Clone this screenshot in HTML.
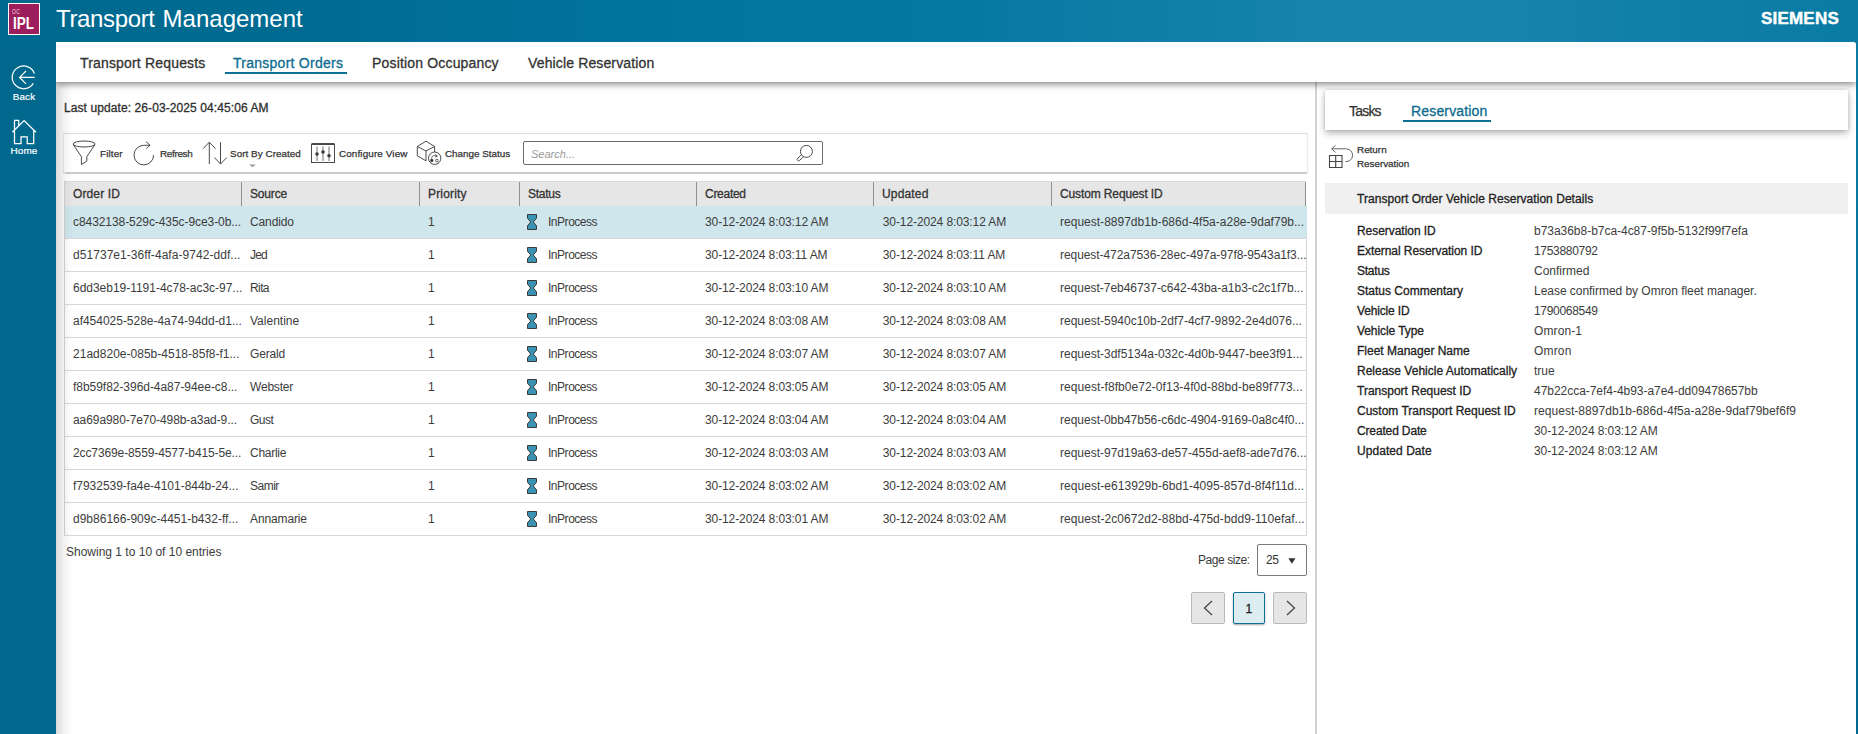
<!DOCTYPE html>
<html lang="en"><head>
<meta charset="utf-8">
<title>Transport Management</title>
<style>
*{box-sizing:border-box;margin:0;padding:0}
html,body{width:1858px;height:734px;overflow:hidden}
body{font-family:"Liberation Sans",sans-serif;font-size:12px;color:#3a3a3a;background:#006c93;position:relative}
.abs{position:absolute}
.t{position:absolute;white-space:nowrap;line-height:1}
.sb{-webkit-text-stroke:0.35px currentColor}
#hdr{left:0;top:0;width:1858px;height:42px;background:linear-gradient(90deg,#00678d 0%,#00698f 25%,#0f7ea6 55%,#1585ae 70%,#0f7ea6 85%,#0b78a0 100%)}
#side{left:0;top:42px;width:56px;height:692px;background:#00678d}
#main{left:56px;top:42px;width:1800px;height:692px;background:#fff;border-top-right-radius:3px;overflow:hidden}
#tabs{left:0;top:0;width:1800px;height:40px;background:#fff;box-shadow:0 1px 6px rgba(0,0,0,.45);z-index:5}

#logo{left:8px;top:3px;width:32px;height:32px;background:#9d1e5c;border:1px solid #fff}
#logo .oc{left:3px;top:5px;font-size:7px;color:#f3dbe6;letter-spacing:.4px}
#logo .ipl{left:3.5px;top:12px;font-size:16.5px;font-weight:bold;color:#fff;transform:scaleX(.8);transform-origin:0 0}
#title{left:56px;top:5px;font-size:24.5px;color:#fff;letter-spacing:-.55px}
#siemens{left:1761px;top:10px;font-size:15.5px;font-weight:bold;color:#fff;letter-spacing:.2px}
.nav{left:0;width:48px;text-align:center;color:#fff;font-size:10.5px}

#title{left:56px;top:8px;font-size:22px;color:#fff;letter-spacing:.55px}
.tab{top:14px;font-size:13.5px;color:#333;-webkit-text-stroke:.3px #333}
.tab.on{color:#0f6f92;-webkit-text-stroke:.3px #0f6f92}
.ul{height:2px;background:#0f789b}
#lshadow{left:0;top:40px;width:8px;height:652px;background:linear-gradient(90deg,rgba(0,0,0,.16),rgba(0,0,0,.04) 50%,rgba(0,0,0,0));z-index:4}
#upd{left:8px;top:59px;font-size:12px;color:#2f2f2f;-webkit-text-stroke:.3px #2f2f2f}
#tb{left:8px;top:92px;width:1243px;height:38px;background:#fff;border:1px solid #dcdcdc;box-shadow:0 1px 3px rgba(0,0,0,.35)}
.tbl{top:14px;font-size:10px;color:#333;-webkit-text-stroke:.25px #333}
#search{left:467px;top:99px;width:300px;height:24px;border:1px solid #6b6b6b;border-radius:2px;background:#fff}
#search .ph{left:7px;top:6px;font-size:11.5px;font-style:italic;color:#9a9a9a}

#title{top:9px;letter-spacing:.95px}
.tab{top:13.5px;font-size:14px;letter-spacing:.22px}
#upd{top:59.5px;letter-spacing:.09px}
.tbl{top:14px;font-size:9.6px;letter-spacing:.2px}
#search .ph{font-size:11px;top:6.5px}
svg{position:absolute;overflow:visible}
.ic{fill:none;stroke:#4a4a4a;stroke-width:1}
.navt{left:0;width:48px;text-align:center;color:#fff;font-size:10px;-webkit-text-stroke:.3px #fff;letter-spacing:.2px}
#thead{left:8px;top:139px;width:1243px;height:25px;background:#e6e6e6;border-left:1px solid #d4d4d4;border-top:1px solid #dadada}
.th{top:6px;font-size:12px;color:#333;-webkit-text-stroke:.3px #333}
.cs{top:0;width:1px;height:25px;background:#8f8f8f}
.row{left:8px;width:1243px;height:33px;border-left:1px solid #d4d4d4;border-right:1px solid #d4d4d4;border-bottom:1px solid #d9d9d9;background:#fff}
.row.sel{background:#cfe6ec}
.td{top:10px;font-size:12px;color:#3c3c3c}

#showing{left:10px;top:504px;font-size:12px;color:#3c3c3c}
#pgsz{left:1142px;top:512px;font-size:12px;color:#3c3c3c}
#sel{left:1201px;top:502px;width:50px;height:32px;border:1px solid #7a7a7a;border-radius:2px;background:#fff}
.pb{top:550px;width:34px;height:32px;background:#e6e6e6;border:1px solid #b9b9b9;border-radius:2px}
.pb.cur{width:32px;background:#dcecf1;border-color:#0f6f92;box-shadow:0 1px 2px rgba(0,0,0,.35)}
#vsep{left:1259px;top:40px;width:2px;height:652px;background:#d2d2d2;z-index:3}
#rshadow{left:1261px;top:40px;width:8px;height:652px;background:linear-gradient(90deg,rgba(0,0,0,.10),rgba(0,0,0,.03) 50%,rgba(0,0,0,0));z-index:3}
#rtabs{left:1269px;top:48px;width:523px;height:39px;background:#fff;box-shadow:0 2px 6px rgba(0,0,0,.35)}
.rtab{top:13px;font-size:14px;color:#333;-webkit-text-stroke:.25px #333;letter-spacing:.2px}
.rtab.on{color:#0f6f92;-webkit-text-stroke:.25px #0f6f92}
.rr{left:1301px;font-size:9.6px;color:#333;-webkit-text-stroke:.25px #333;letter-spacing:.2px}
#sec{left:1269px;top:141px;width:523px;height:31px;background:#f0f0f0}
#sec span{left:32px;top:9.5px;font-size:12px;color:#2f2f2f;-webkit-text-stroke:.3px #2f2f2f}
.dl{left:1301px;font-size:12px;color:#2f2f2f;-webkit-text-stroke:.3px #2f2f2f}
.dv{left:1478px;font-size:12px;color:#3c3c3c}

#logo .oc{left:3.2px;top:4px;font-size:8px;letter-spacing:.6px;transform:scaleX(.62);transform-origin:0 0}
#logo .ipl{top:10.8px;left:3.8px;transform:scaleX(.82)}
.navt{font-size:9.4px;letter-spacing:0;-webkit-text-stroke:.3px #fff}
.tab{letter-spacing:.17px}

#title{top:7.3px;font-size:24px;letter-spacing:0}

.c1{letter-spacing:-.11px}.c4{letter-spacing:-.47px}.c5{letter-spacing:-.1px}.c7{letter-spacing:-.07px}

#tb{left:7px;top:91px;width:1245px;height:39px;border:0;border-top:1px solid #dcdcdc;border-left:1px solid #ececec;border-right:1px solid #ececec;box-shadow:0 1.5px 1px rgba(0,0,0,.2)}
#tb svg{left:0;top:0}
#thead{width:1242px}
#lshadow{width:14px;background:linear-gradient(90deg,rgba(0,0,0,.16),rgba(0,0,0,.07) 30%,rgba(0,0,0,.02) 65%,rgba(0,0,0,0))}
.navt{-webkit-text-stroke:.2px #fff}
.rtab{top:14.2px}
.dl,#sec span{color:#222;-webkit-text-stroke:.3px #222}
.dvd{letter-spacing:-.09px}

.tbl{margin-left:1px;top:15px}

#siemens{top:9.7px;font-size:17px;-webkit-text-stroke:.45px #fff}

#hdr{background:linear-gradient(90deg,#00698f 0%,#006b92 17%,#0076a1 39%,#0278a2 50%,#087aa3 54%,#1583aa 70%,#1684ab 80%,#0f7ea6 92%,#0a7ba3 100%)}
body{background:linear-gradient(180deg,#0a7ba3 0,#0a7ba3 42px,#00678d 100%)}

#rshadow{display:none}
#rtabs{height:40px;box-shadow:0 3px 7px rgba(0,0,0,.3),0 0 3px rgba(0,0,0,.12)}
#lshadow{width:18px;background:linear-gradient(90deg,rgba(0,0,0,.15),rgba(0,0,0,.11) 15%,rgba(0,0,0,.05) 45%,rgba(0,0,0,.015) 75%,rgba(0,0,0,0))}
.rr,.tbl{font-size:9.9px}

#tabs{box-shadow:0 2px 7px rgba(0,0,0,.5)}
.ul{background:#0a7297}
.tab.on,.rtab.on{color:#0c6b90;-webkit-text-stroke:.3px #0c6b90}
.pb svg path{stroke-width:1.25;stroke:#444}
.ttl{top:7.3px;font-size:24px;color:#fff}
.tab{top:13.9px}
.navt{font-size:9.9px;letter-spacing:.15px}
.row.sel{border-right-color:#cfe6ec}
</style>
</head>
<body>
<div class="abs" id="hdr">
  <div class="abs" id="logo"><span class="t oc">OC</span><span class="t ipl">IPL</span></div>
  <div class="t ttl" style="left: 56px; letter-spacing: -0.35px;">Transport</div><div class="t ttl" style="left:162.6px">Management</div>
  <div class="t" id="siemens">SIEMENS</div>
</div>
<div class="abs" id="side">
  <svg width="56" height="120" style="left:0;top:.8px" viewBox="0 42 56 120">
    <g fill="none" stroke="#fff" stroke-width="1.25">
      <path d="M34.4 72.6A11.4 11.4 0 1 0 33.3 82.4"></path>
      <path d="M34.7 76.4H19.6M26 70L19.6 76.4L26 82.9"></path>
      <path d="M14.5 128.9V119.3H18.7V124.8M12.3 131.3L24.1 119.6L36 131.3M14.5 129.2V142.5H21V135.8H27.2V142.5H33.7V129.2"></path>
    </g>
  </svg>
  <div class="t navt" style="top:50px">Back</div>
  <div class="t navt" style="top:104.2px">Home</div>
</div>
<div class="abs" id="main">
  <div class="abs" id="tabs">
    <span class="t tab" style="left:24px">Transport Requests</span>
    <span class="t tab on" style="left: 177px; letter-spacing: 0.257px;">Transport Orders</span>
    <div class="abs ul" style="left:169px;top:30px;width:122px"></div>
    <span class="t tab" style="left:316px">Position Occupancy</span>
    <span class="t tab" style="left: 472px; letter-spacing: 0.137px;">Vehicle Reservation</span>
  </div>
  <div class="abs" id="lshadow"></div>
  <div class="t" id="upd">Last update: 26-03-2025 04:45:06 AM</div>
  <div class="abs" id="tb">
    <svg width="1243" height="38" viewBox="64 134 1243 38">
      <g class="ic">
        <ellipse cx="84.1" cy="144" rx="10.9" ry="3"></ellipse>
        <path d="M73.4 144.8L81.4 156.7V164.5L86.8 161.2V156.7L94.8 144.8"></path>
        <path d="M150 145.2L143.8 145.3A9.8 9.8 0 1 0 153.6 155.1"></path>
        <path d="M146 141.7L150.1 145.2L146.4 148.6"></path>
        <path d="M209.3 164V142.2M203.2 148.7L209.3 142.2L215.5 148.7M220.5 142.2V164M214.4 157.5L220.5 164L226.8 157.5"></path>
        <rect x="311.5" y="144.5" width="23" height="18"></rect>
        <path d="M311.5 144H334.5" stroke-width="2"></path>
        <path d="M317 146.5V161M323 146.5V161M329 146.5V161" stroke="#9a9a9a" stroke-width="1.4"></path>
        <path d="M426 141.2L417.3 146.5V155.8L426 160.8V150.9L434.6 146.5V152M426 141.2L434.6 146.5M417.3 146.5L426 150.9"></path>
        <circle cx="434.7" cy="158.2" r="6.2" fill="#fff"></circle>
        <path d="M431.6 158.6C431.8 155.6 434.6 154.6 437 156.2M435.6 154.4L437.4 156.2L435 157.2" stroke-width=".9"></path>
        <circle cx="436.9" cy="160.6" r="1.3" stroke-width=".9"></circle>
      </g>
      <g fill="#3a3a3a"><circle cx="317" cy="154" r="1.8"></circle><circle cx="323" cy="152" r="1.8"></circle><circle cx="329" cy="155.8" r="1.8"></circle><circle cx="431.8" cy="160.4" r="1.6"></circle></g>
      <path d="M249 164.4H256L252.5 167.3Z" fill="#9a9a9a"></path>
    </svg>
    <span class="t tbl" style="left: 35px; letter-spacing: 0.12px;">Filter</span>
    <span class="t tbl" style="left: 95px; letter-spacing: -0.317px;">Refresh</span>
    <span class="t tbl" style="left: 165px; letter-spacing: 0.043px;">Sort By Created</span>
    <span class="t tbl" style="left: 274px; letter-spacing: 0.123px;">Configure View</span>
    <span class="t tbl" style="left: 380px; letter-spacing: -0.017px;">Change Status</span>
  </div>
<div class="abs" id="thead"><span class="t th" style="left: 8px; letter-spacing: 0.114px;">Order ID</span><span class="t th" style="left: 185px; letter-spacing: -0.18px;">Source</span><span class="t th" style="left: 363px; letter-spacing: 0.171px;">Priority</span><span class="t th" style="left: 463px; letter-spacing: -0.26px;">Status</span><span class="t th" style="left: 640px; letter-spacing: -0.283px;">Created</span><span class="t th" style="left: 817px; letter-spacing: 0.167px;">Updated</span><span class="t th" style="left: 995px; letter-spacing: -0.125px;">Custom Request ID</span><div class="abs cs" style="left:176px"></div><div class="abs cs" style="left:354px"></div><div class="abs cs" style="left:454px"></div><div class="abs cs" style="left:631px"></div><div class="abs cs" style="left:808px"></div><div class="abs cs" style="left:986px"></div><div class="abs cs" style="left:1240px"></div></div>
<div class="abs row sel" style="top:164px"><span class="t td c1" style="left: 8px; letter-spacing: -0.071px;">c8432138-529c-435c-9ce3-0b...</span><span class="t td" style="left: 185px; letter-spacing: -0.117px;">Candido</span><span class="t td" style="left:363px">1</span><svg width="10" height="16" style="left:462px;top:8px" viewBox="0 0 10 16"><path d="M.5 .5H9.5V4.2L6.3 8L9.5 11.8V15.5H.5V11.8L3.7 8L.5 4.2Z" fill="#3a93b2" stroke="#3a3a3a" stroke-width="1"></path></svg><span class="t td c4" style="left:483px">InProcess</span><span class="t td c5" style="left:640px">30-12-2024 8:03:12 AM</span><span class="t td c5" style="left:817.8px">30-12-2024 8:03:12 AM</span><span class="t td c7" style="left: 995px; letter-spacing: 0.013px;">request-8897db1b-686d-4f5a-a28e-9daf79b...</span></div>
<div class="abs row" style="top:197px"><span class="t td c1" style="left: 8px; letter-spacing: 0.052px;">d51737e1-36ff-4afa-9742-ddf...</span><span class="t td" style="left: 185px; letter-spacing: -0.85px;">Jed</span><span class="t td" style="left:363px">1</span><svg width="10" height="16" style="left:462px;top:8px" viewBox="0 0 10 16"><path d="M.5 .5H9.5V4.2L6.3 8L9.5 11.8V15.5H.5V11.8L3.7 8L.5 4.2Z" fill="#3a93b2" stroke="#3a3a3a" stroke-width="1"></path></svg><span class="t td c4" style="left:483px">InProcess</span><span class="t td c5" style="left:640px">30-12-2024 8:03:11 AM</span><span class="t td c5" style="left:817.8px">30-12-2024 8:03:11 AM</span><span class="t td c7" style="left:995px">request-472a7536-28ec-497a-97f8-9543a1f3...</span></div>
<div class="abs row" style="top:230px"><span class="t td c1" style="left: 8px; letter-spacing: -0.021px;">6dd3eb19-1191-4c78-ac3c-97...</span><span class="t td" style="left: 185px; letter-spacing: -0.6px;">Rita</span><span class="t td" style="left:363px">1</span><svg width="10" height="16" style="left:462px;top:8px" viewBox="0 0 10 16"><path d="M.5 .5H9.5V4.2L6.3 8L9.5 11.8V15.5H.5V11.8L3.7 8L.5 4.2Z" fill="#3a93b2" stroke="#3a3a3a" stroke-width="1"></path></svg><span class="t td c4" style="left:483px">InProcess</span><span class="t td c5" style="left:640px">30-12-2024 8:03:10 AM</span><span class="t td c5" style="left:817.8px">30-12-2024 8:03:10 AM</span><span class="t td c7" style="left: 995px; letter-spacing: -0.033px;">request-7eb46737-c642-43ba-a1b3-c2c1f7b...</span></div>
<div class="abs row" style="top:263px"><span class="t td c1" style="left: 8px; letter-spacing: -0.021px;">af454025-528e-4a74-94dd-d1...</span><span class="t td" style="left:185px">Valentine</span><span class="t td" style="left:363px">1</span><svg width="10" height="16" style="left:462px;top:8px" viewBox="0 0 10 16"><path d="M.5 .5H9.5V4.2L6.3 8L9.5 11.8V15.5H.5V11.8L3.7 8L.5 4.2Z" fill="#3a93b2" stroke="#3a3a3a" stroke-width="1"></path></svg><span class="t td c4" style="left:483px">InProcess</span><span class="t td c5" style="left:640px">30-12-2024 8:03:08 AM</span><span class="t td c5" style="left:817.8px">30-12-2024 8:03:08 AM</span><span class="t td c7" style="left: 995px; letter-spacing: -0.007px;">request-5940c10b-2df7-4cf7-9892-2e4d076...</span></div>
<div class="abs row" style="top:296px"><span class="t td c1" style="left: 8px; letter-spacing: 0.015px;">21ad820e-085b-4518-85f8-f1...</span><span class="t td" style="left: 185px; letter-spacing: -0.16px;">Gerald</span><span class="t td" style="left:363px">1</span><svg width="10" height="16" style="left:462px;top:8px" viewBox="0 0 10 16"><path d="M.5 .5H9.5V4.2L6.3 8L9.5 11.8V15.5H.5V11.8L3.7 8L.5 4.2Z" fill="#3a93b2" stroke="#3a3a3a" stroke-width="1"></path></svg><span class="t td c4" style="left:483px">InProcess</span><span class="t td c5" style="left:640px">30-12-2024 8:03:07 AM</span><span class="t td c5" style="left:817.8px">30-12-2024 8:03:07 AM</span><span class="t td c7" style="left: 995px; letter-spacing: -0.007px;">request-3df5134a-032c-4d0b-9447-bee3f91...</span></div>
<div class="abs row" style="top:329px"><span class="t td c1" style="left: 8px; letter-spacing: -0.039px;">f8b59f82-396d-4a87-94ee-c8...</span><span class="t td" style="left: 185px; letter-spacing: -0.2px;">Webster</span><span class="t td" style="left:363px">1</span><svg width="10" height="16" style="left:462px;top:8px" viewBox="0 0 10 16"><path d="M.5 .5H9.5V4.2L6.3 8L9.5 11.8V15.5H.5V11.8L3.7 8L.5 4.2Z" fill="#3a93b2" stroke="#3a3a3a" stroke-width="1"></path></svg><span class="t td c4" style="left:483px">InProcess</span><span class="t td c5" style="left:640px">30-12-2024 8:03:05 AM</span><span class="t td c5" style="left:817.8px">30-12-2024 8:03:05 AM</span><span class="t td c7" style="left: 995px; letter-spacing: 0.061px;">request-f8fb0e72-0f13-4f0d-88bd-be89f773...</span></div>
<div class="abs row" style="top:362px"><span class="t td c1" style="left: 8px; letter-spacing: -0.08px;">aa69a980-7e70-498b-a3ad-9...</span><span class="t td" style="left: 185px; letter-spacing: -0.5px;">Gust</span><span class="t td" style="left:363px">1</span><svg width="10" height="16" style="left:462px;top:8px" viewBox="0 0 10 16"><path d="M.5 .5H9.5V4.2L6.3 8L9.5 11.8V15.5H.5V11.8L3.7 8L.5 4.2Z" fill="#3a93b2" stroke="#3a3a3a" stroke-width="1"></path></svg><span class="t td c4" style="left:483px">InProcess</span><span class="t td c5" style="left:640px">30-12-2024 8:03:04 AM</span><span class="t td c5" style="left:817.8px">30-12-2024 8:03:04 AM</span><span class="t td c7" style="left: 995px; letter-spacing: -0.011px;">request-0bb47b56-c6dc-4904-9169-0a8c4f0...</span></div>
<div class="abs row" style="top:395px"><span class="t td c1" style="left:8px">2cc7369e-8559-4577-b415-5e...</span><span class="t td" style="left: 185px; letter-spacing: -0.267px;">Charlie</span><span class="t td" style="left:363px">1</span><svg width="10" height="16" style="left:462px;top:8px" viewBox="0 0 10 16"><path d="M.5 .5H9.5V4.2L6.3 8L9.5 11.8V15.5H.5V11.8L3.7 8L.5 4.2Z" fill="#3a93b2" stroke="#3a3a3a" stroke-width="1"></path></svg><span class="t td c4" style="left:483px">InProcess</span><span class="t td c5" style="left:640px">30-12-2024 8:03:03 AM</span><span class="t td c5" style="left:817.8px">30-12-2024 8:03:03 AM</span><span class="t td c7" style="left: 995px; letter-spacing: -0.007px;">request-97d19a63-de57-455d-aef8-ade7d76...</span></div>
<div class="abs row" style="top:428px"><span class="t td c1" style="left: 8px; letter-spacing: -0.024px;">f7932539-fa4e-4101-844b-24...</span><span class="t td" style="left: 185px; letter-spacing: -0.5px;">Samir</span><span class="t td" style="left:363px">1</span><svg width="10" height="16" style="left:462px;top:8px" viewBox="0 0 10 16"><path d="M.5 .5H9.5V4.2L6.3 8L9.5 11.8V15.5H.5V11.8L3.7 8L.5 4.2Z" fill="#3a93b2" stroke="#3a3a3a" stroke-width="1"></path></svg><span class="t td c4" style="left:483px">InProcess</span><span class="t td c5" style="left:640px">30-12-2024 8:03:02 AM</span><span class="t td c5" style="left:817.8px">30-12-2024 8:03:02 AM</span><span class="t td c7" style="left: 995px; letter-spacing: 0.037px;">request-e613929b-6bd1-4095-857d-8f4f11d...</span></div>
<div class="abs row" style="top:461px"><span class="t td c1" style="left: 8px; letter-spacing: 0.004px;">d9b86166-909c-4451-b432-ff...</span><span class="t td" style="left: 185px; letter-spacing: -0.125px;">Annamarie</span><span class="t td" style="left:363px">1</span><svg width="10" height="16" style="left:462px;top:8px" viewBox="0 0 10 16"><path d="M.5 .5H9.5V4.2L6.3 8L9.5 11.8V15.5H.5V11.8L3.7 8L.5 4.2Z" fill="#3a93b2" stroke="#3a3a3a" stroke-width="1"></path></svg><span class="t td c4" style="left:483px">InProcess</span><span class="t td c5" style="left:640px">30-12-2024 8:03:01 AM</span><span class="t td c5" style="left:817.8px">30-12-2024 8:03:02 AM</span><span class="t td c7" style="left: 995px; letter-spacing: 0.067px;">request-2c0672d2-88bd-475d-bdd9-110efaf...</span></div>
  <div class="t" id="showing">Showing 1 to 10 of 10 entries</div>
  <div class="t" id="pgsz" style="letter-spacing: -0.444px;">Page size:</div>
  <div class="abs" id="sel"><span class="t" style="left:8px;top:9px;font-size:12px;letter-spacing:-.45px;color:#333">25</span><svg width="8" height="6" style="left:29.5px;top:13px" viewBox="0 0 8 6"><path d="M.3 .2H7.5L3.9 5.8Z" fill="#333"></path></svg></div>
  <div class="abs pb" style="left:1135px"><svg width="10" height="16" style="left:11px;top:7px" viewBox="0 0 10 16"><path d="M9 1L1.5 8L9 15" class="ic"></path></svg></div>
  <div class="abs pb cur" style="left:1177px"><span class="t" style="left:11.5px;top:10px;font-size:12px;color:#222;-webkit-text-stroke:.3px #222">1</span></div>
  <div class="abs pb" style="left:1217px"><svg width="10" height="16" style="left:12px;top:7px" viewBox="0 0 10 16"><path d="M1 1L8.5 8L1 15" class="ic"></path></svg></div>
  <div class="abs" id="vsep"></div>
  
  <div class="abs" id="rtabs">
    <span class="t rtab" style="left: 24px; letter-spacing: -0.8px;">Tasks</span>
    <span class="t rtab on" style="left: 86px; letter-spacing: 0.16px;">Reservation</span>
    <div class="abs ul" style="left:78px;top:30px;width:88px"></div>
  </div>
  <svg width="30" height="28" style="left:1270px;top:100px" viewBox="1326 142 30 28"><g class="ic"><path d="M1335.5 145.3L1331.6 148.8L1335.5 152.4M1331.8 148.8H1346.6A6.6 6.4 0 0 1 1345.4 161.6" stroke="#666"></path><path d="M1329.5 155.5H1342V167.5H1329.5ZM1335.7 155.5V167.5M1329.5 161.5H1342" stroke="#444" stroke-width="1.1"></path></g></svg>
  <span class="t rr" style="top: 102.5px; letter-spacing: 0px;">Return</span>
  <span class="t rr" style="top: 116.5px; letter-spacing: -0.04px;">Reservation</span>
  <div class="abs" id="sec"><span class="t" style="letter-spacing: 0.043px;">Transport Order Vehicle Reservation Details</span></div>
  <span class="t dl" style="top: 183px; letter-spacing: -0.046px;">Reservation ID</span><span class="t dv" style="top: 183px; letter-spacing: -0.029px;">b73a36b8-b7ca-4c87-9f5b-5132f99f7efa</span>
  <span class="t dl" style="top: 203px; letter-spacing: -0.064px;">External Reservation ID</span><span class="t dv" style="top: 203px; letter-spacing: -0.311px;">1753880792</span>
  <span class="t dl" style="top: 223px; letter-spacing: -0.24px;">Status</span><span class="t dv" style="top:223px">Confirmed</span>
  <span class="t dl" style="top:243px">Status Commentary</span><span class="t dv" style="top: 243px; letter-spacing: -0.036px;">Lease confirmed by Omron fleet manager.</span>
  <span class="t dl" style="top: 263px; letter-spacing: -0.156px;">Vehicle ID</span><span class="t dv" style="top: 263px; letter-spacing: -0.311px;">1790068549</span>
  <span class="t dl" style="top: 283px; letter-spacing: -0.073px;">Vehicle Type</span><span class="t dv" style="top: 283px; letter-spacing: 0.117px;">Omron-1</span>
  <span class="t dl" style="top:303px">Fleet Manager Name</span><span class="t dv" style="top: 303px; letter-spacing: 0.175px;">Omron</span>
  <span class="t dl" style="top:323px">Release Vehicle Automatically</span><span class="t dv" style="top:323px">true</span>
  <span class="t dl" style="top:343px">Transport Request ID</span><span class="t dv" style="top: 343px; letter-spacing: -0.034px;">47b22cca-7ef4-4b93-a7e4-dd09478657bb</span>
  <span class="t dl" style="top:363px">Custom Transport Request ID</span><span class="t dv" style="top: 363px; letter-spacing: 0.04px;">request-8897db1b-686d-4f5a-a28e-9daf79bef6f9</span>
  <span class="t dl" style="top: 383px; letter-spacing: -0.145px;">Created Date</span><span class="t dv dvd" style="top:383px">30-12-2024 8:03:12 AM</span>
  <span class="t dl" style="top: 403px; letter-spacing: 0.054px;">Updated Date</span><span class="t dv dvd" style="top:403px">30-12-2024 8:03:12 AM</span>
  <div class="abs" id="search"><span class="t ph">Search...</span><svg width="24" height="24" style="left:270.2px;top:-2px" viewBox="794 140 24 24"><g class="ic" stroke="#505050" stroke-width="1.3"><circle cx="806.4" cy="151.4" r="6"></circle><path d="M801.4 154.9L797.6 158.4A1.2 1.2 0 0 0 799.6 160.4L803.4 156.9"></path></g></svg></div>
</div>


</body></html>
